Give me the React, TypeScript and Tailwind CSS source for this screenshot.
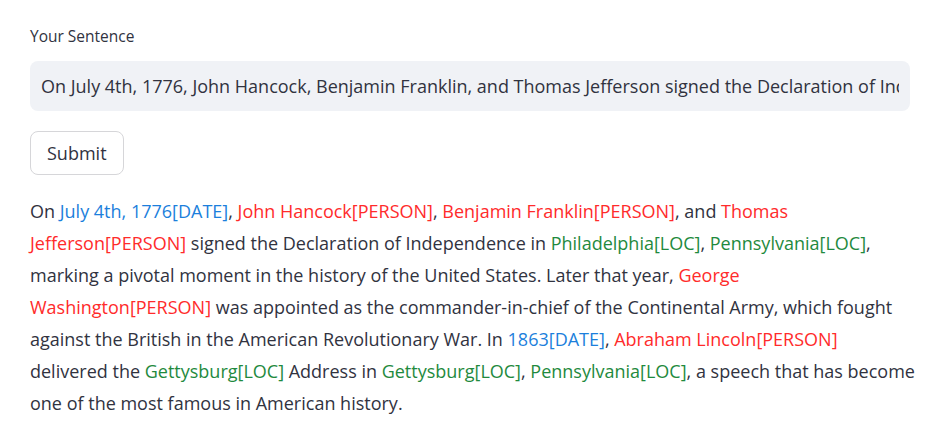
const sentence =
  "On July 4th, 1776, John Hancock, Benjamin Franklin, and Thomas Jefferson signed the Declaration of Independence in Philadelphia, Pennsylvania, marking a pivotal moment in the history of the United States.";

type Part = { text: string; label?: "DATE" | "PERSON" | "LOC" };

const parts: Part[] = [
  { text: "On " },
  { text: "July 4th, 1776", label: "DATE" },
  { text: ", " },
  { text: "John Hancock", label: "PERSON" },
  { text: ", " },
  { text: "Benjamin Franklin", label: "PERSON" },
  { text: ", and " },
  { text: "Thomas Jefferson", label: "PERSON" },
  { text: " signed the Declaration of Independence in " },
  { text: "Philadelphia", label: "LOC" },
  { text: ", " },
  { text: "Pennsylvania", label: "LOC" },
  { text: ", marking a pivotal moment in the history of the United States. Later that year, " },
  { text: "George Washington", label: "PERSON" },
  { text: " was appointed as the commander-in-chief of the Continental Army, which fought against the British in the American Revolutionary War. In " },
  { text: "1863", label: "DATE" },
  { text: ", " },
  { text: "Abraham Lincoln", label: "PERSON" },
  { text: " delivered the " },
  { text: "Gettysburg", label: "LOC" },
  { text: " Address in " },
  { text: "Gettysburg", label: "LOC" },
  { text: ", " },
  { text: "Pennsylvania", label: "LOC" },
  { text: ", a speech that has become one of the most famous in American history." },
];

const labelColor = {
  DATE: "text-[#1c7fdc]",
  PERSON: "text-[#ff2b2b]",
  LOC: "text-[#1f8a3e]",
};

export default function App() {
  return (
    <div className="min-h-screen bg-white text-[#31333f] font-['Open_Sans','Noto_Sans',sans-serif]">
      <div className="w-[880px] ml-[30px] pt-[25px]">
        <label className="block text-[15.5px] leading-[22px]">Your Sentence</label>
        <div className="mt-[14px] h-[50px] rounded-lg bg-[#f0f2f6] px-[11px] flex items-center overflow-hidden">
          <input
            className="w-full bg-transparent outline-none text-[18px] text-[#31333f]"
            defaultValue={sentence}
            readOnly
          />
        </div>
        <button className="mt-[20px] h-[44px] px-[16px] rounded-lg border border-[#d6d6d9] bg-white text-[18px]">
          Submit
        </button>
        <p className="mt-[20px] w-[886px] text-[18px] leading-[32px]">
          {parts.map((p, i) =>
            p.label ? (
              <span key={i} className={labelColor[p.label]}>
                {p.text}[{p.label}]
              </span>
            ) : (
              <span key={i}>{p.text}</span>
            )
          )}
        </p>
      </div>
    </div>
  );
}
